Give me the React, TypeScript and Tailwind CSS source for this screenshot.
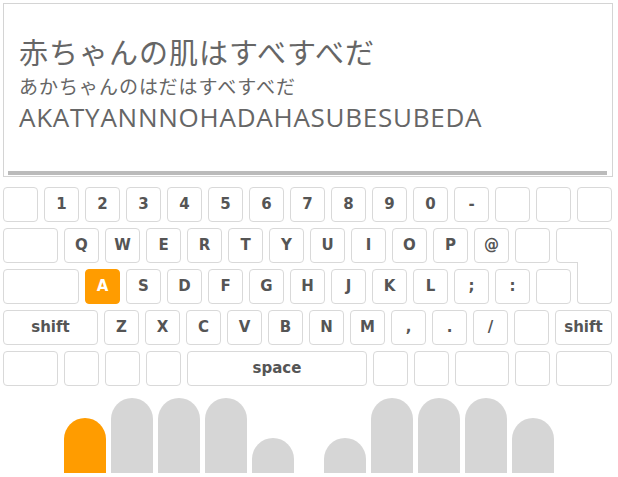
type KeyDef = { label?: string; w?: string; active?: boolean };

const keyFont = { fontFamily: '"DejaVu Sans", Verdana, sans-serif' };

// rows of the on-screen keyboard; the enter key is drawn separately (it spans two rows)
const row1: KeyDef[] = [
  {}, { label: '1' }, { label: '2' }, { label: '3' }, { label: '4' }, { label: '5' }, { label: '6' },
  { label: '7' }, { label: '8' }, { label: '9' }, { label: '0' }, { label: '-' }, {}, {}, {},
];

const row2: KeyDef[] = [
  { w: 'w-[55px]' }, { label: 'Q' }, { label: 'W' }, { label: 'E' }, { label: 'R' }, { label: 'T' },
  { label: 'Y' }, { label: 'U' }, { label: 'I' }, { label: 'O' }, { label: 'P' }, { label: '@' }, {},
];

const row3: KeyDef[] = [
  { w: 'w-[76px]' }, { label: 'A', active: true }, { label: 'S' }, { label: 'D' }, { label: 'F' },
  { label: 'G' }, { label: 'H' }, { label: 'J' }, { label: 'K' }, { label: 'L' }, { label: ';' },
  { label: ':' }, {},
];

const row4: KeyDef[] = [
  { label: 'shift', w: 'w-[95px]' }, { label: 'Z' }, { label: 'X' }, { label: 'C' }, { label: 'V' },
  { label: 'B' }, { label: 'N' }, { label: 'M' }, { label: ',' }, { label: '.' }, { label: '/' }, {},
  { label: 'shift', w: 'w-[57px]' },
];

const row5: KeyDef[] = [
  { w: 'w-[55px]' }, {}, {}, {}, { label: 'space', w: 'w-[180px]' }, {}, {}, { w: 'w-[54px]' }, {},
  { w: 'w-[56px]' },
];

function Key({ label, w = 'w-[35px]', active }: KeyDef) {
  return (
    <div
      style={keyFont}
      className={`${w} h-[35px] shrink-0 flex items-center justify-center rounded-[4px] border text-[15px] font-bold ${
        active ? 'border-[#ff9c00] bg-[#ff9c00] text-white' : 'border-[#d9d9d9] bg-white text-[#555555]'
      }`}
    >
      {label}
    </div>
  );
}

function Row({ keys, children }: { keys: KeyDef[]; children?: React.ReactNode }) {
  return (
    <div className="flex items-start gap-[6px]">
      {keys.map((k, i) => (
        <Key key={i} {...k} />
      ))}
      {children}
    </div>
  );
}

const fingers = [
  { h: 'h-[55px]', active: true },
  { h: 'h-[75px]' },
  { h: 'h-[75px]' },
  { h: 'h-[75px]' },
  { h: 'h-[35px]' },
];

function Hand({ right }: { right?: boolean }) {
  const list = right ? [...fingers].reverse().map((f) => ({ ...f, active: false })) : fingers;
  return (
    <div className="flex items-end gap-[5px]">
      {list.map((f, i) => (
        <div
          key={i}
          className={`w-[42px] ${f.h} rounded-t-full ${f.active ? 'bg-[#ff9c00]' : 'bg-[#d6d6d6]'}`}
        />
      ))}
    </div>
  );
}

const jp = { fontFamily: '"Noto Sans CJK JP", sans-serif' };

export default function App() {
  return (
    <div className="w-[618px] h-[477px] overflow-hidden bg-white px-[3px] pt-[3px]">
      {/* question panel */}
      <div className="w-[610px] h-[174px] flex flex-col border border-[#d4d4d4] bg-white">
        <div className="flex-1 pl-[15px] pt-[26px] text-[#666666]">
          <div className="text-[29px] leading-[42px] tracking-[1px]" style={jp}>
            赤ちゃんの肌はすべすべだ
          </div>
          <div className="text-[19px] leading-[28px] tracking-[1px]" style={jp}>
            あかちゃんのはだはすべすべだ
          </div>
          <div
            className="text-[26px] leading-[34px] tracking-[0.75px]"
            style={{ fontFamily: '"Open Sans", sans-serif' }}
          >
            AKATYANNNOHADAHASUBESUBEDA
          </div>
        </div>
        <div className="ml-[4px] mr-[5px] mb-[1px] h-[4px] bg-[#bbbbbb]" />
      </div>

      {/* keyboard */}
      <div className="mt-[10px] flex flex-col gap-[6px]">
        <Row keys={row1} />
        <Row keys={row2}>
          <div className="w-[56px] h-[35px] shrink-0 rounded-t-[4px] rounded-bl-[4px] border border-[#d9d9d9] bg-white" />
        </Row>
        <Row keys={row3}>
          <div className="relative -mt-[7px] w-[35px] h-[42px] shrink-0 rounded-b-[4px] border border-t-0 border-[#d9d9d9] bg-white" />
        </Row>
        <Row keys={row4} />
        <Row keys={row5} />
      </div>

      {/* finger guide */}
      <div className="mt-[12px] flex items-end justify-center gap-[30px]">
        <Hand />
        <Hand right />
      </div>
    </div>
  );
}
